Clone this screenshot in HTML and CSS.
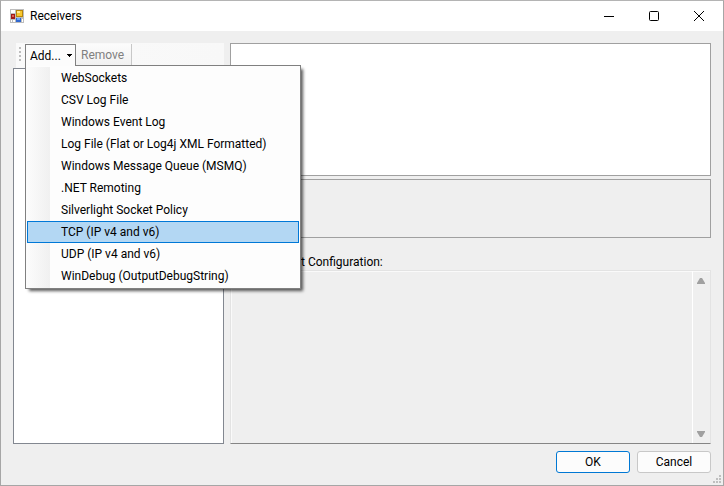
FILE: index.html
```html
<!DOCTYPE html>
<html lang="en">
<head>
<meta charset="utf-8">
<title>Receivers</title>
<link rel="stylesheet" href="styles.css">
</head>
<body>
<div class="window">
  <header class="titlebar">
    <svg class="app-icon" width="14" height="14" viewBox="0 0 14 14" shape-rendering="crispEdges" aria-hidden="true">
      <path fill="#bdbdbd" d="M0 0h14v14H0z"/>
      <path fill="#fff" d="M1 1h4v3H1zM1 11h1v2H1zM3 11h2v2H3zM12 10h1v3h-1z"/>
      <path fill="#a01818" d="M1 5h4v5H1z"/>
      <path fill="#e06050" d="M2 6h2v2H2z"/>
      <path fill="#b8860b" d="M6 1h7v7H6z"/>
      <path fill="#f8c830" d="M7 2h5v5H7z"/>
      <path fill="#ffe890" d="M7 2h3v2H7z"/>
      <path fill="#3068d0" d="M6 9h5v4H6z"/>
      <path fill="#70a8f8" d="M7 9h3v2H7z"/>
    </svg>
    <h1 class="title">Receivers</h1>
    <div class="captions">
      <button class="caption" type="button" aria-label="Minimize"><svg width="12" height="12" viewBox="0 0 12 12"><path d="M1 6.5h10"/></svg></button>
      <button class="caption" type="button" aria-label="Maximize"><svg width="12" height="12" viewBox="0 0 12 12"><rect x="1.5" y="1.5" width="9" height="9" rx="1"/></svg></button>
      <button class="caption" type="button" aria-label="Close"><svg width="12" height="12" viewBox="0 0 12 12"><path d="M1 1l10 10M11 1L1 11"/></svg></button>
    </div>
  </header>
  <main class="client">
    <section class="left">
      <div class="toolbar">
        <span class="grip"></span>
        <div class="dropdown">
          <button class="tool add" type="button" aria-haspopup="true" aria-expanded="true">Add...<svg width="5" height="3" viewBox="0 0 5 3" shape-rendering="crispEdges"><path d="M0 0h5v1H4v1H3v1H2V2H1V1H0z"/></svg></button>
          <div class="menu" role="menu">
            <button type="button" role="menuitem">WebSockets</button>
            <button type="button" role="menuitem">CSV Log File</button>
            <button type="button" role="menuitem">Windows Event Log</button>
            <button type="button" role="menuitem">Log File (Flat or Log4j XML Formatted)</button>
            <button type="button" role="menuitem">Windows Message Queue (MSMQ)</button>
            <button type="button" role="menuitem">.NET Remoting</button>
            <button type="button" role="menuitem">Silverlight Socket Policy</button>
            <button type="button" role="menuitem" class="selected">TCP (IP v4 and v6)</button>
            <button type="button" role="menuitem">UDP (IP v4 and v6)</button>
            <button type="button" role="menuitem">WinDebug (OutputDebugString)</button>
          </div>
        </div>
        <button class="tool remove" type="button" disabled>Remove</button>
      </div>
      <div class="tree"></div>
    </section>
    <section class="right">
      <div class="properties"></div>
      <div class="info"></div>
      <label class="config-label" for="config">t Configuration:</label>
      <div class="config">
        <textarea id="config" readonly></textarea>
        <div class="scrollbar">
          <svg width="8" height="6" viewBox="0 0 8 6"><path d="M3 0h2l3 5v1H0V5z"/></svg>
          <svg width="8" height="6" viewBox="0 0 8 6"><path d="M0 0h8v1L5 6H3L0 1z"/></svg>
        </div>
      </div>
    </section>
  </main>
  <footer class="footer">
    <button class="push default" type="button">OK</button>
    <button class="push" type="button">Cancel</button>
  </footer>
  <svg class="size-grip" width="8" height="8" viewBox="0 0 8 8" shape-rendering="crispEdges" aria-hidden="true"><path d="M6 0h2v2H6zM3 3h2v2H3zM6 3h2v2H6zM0 6h2v2H0zM3 6h2v2H3zM6 6h2v2H6z"/></svg>
</div>
</body>
</html>
```
FILE: styles.css
```css
* {
  box-sizing: border-box;
}

body {
  margin: 0;
  font: 12px/16px Roboto, "Open Sans", sans-serif;
  color: #000;
}

button {
  margin: 0;
  padding: 0;
  border: 0;
  background: none;
  font: inherit;
  color: inherit;
}

.window {
  position: relative;
  display: flex;
  flex-direction: column;
  height: 100vh;
  border: 1px solid #a6a6a6;
  border-top-color: #b4b4b4;
  background: #efefef;
}

.titlebar {
  display: flex;
  align-items: center;
  height: 30px;
  padding: 0 2px 0 9px;
  background: #fff;
}

.title {
  flex: 1;
  margin: 0 0 0 6px;
  font-size: 12px;
  font-weight: 400;
}

.captions {
  display: flex;
}

.caption {
  display: flex;
  align-items: center;
  justify-content: center;
  width: 45px;
  height: 30px;
}

.caption svg {
  fill: none;
  stroke: #000;
}

.client {
  flex: 1;
  display: grid;
  grid-template-columns: 211fr 481fr;
  gap: 6px;
  min-height: 0;
  padding: 12px 12px 0;
}

.left,
.right {
  display: flex;
  flex-direction: column;
  min-width: 0;
}

.toolbar {
  display: flex;
  height: 25px;
  margin-left: 3px;
  background: linear-gradient(90deg, #fafafa, #f8f8f8);
}

.grip {
  width: 2px;
  height: 14px;
  margin: 4px 4px 0 3px;
  background: repeating-linear-gradient(#bdbdbd 0 2px, transparent 2px 4px);
}

.dropdown {
  position: relative;
  margin-top: 1px;
}

.tool {
  display: flex;
  align-items: center;
  height: 22px;
}

.add {
  position: relative;
  z-index: 2;
  justify-content: space-between;
  width: 51px;
  padding: 0 3px 0 4px;
  border: 1px solid #808080;
  border-bottom: 0;
  background: #fcfcfc;
}

.remove {
  width: 56px;
  margin-top: 1px;
  padding-left: 5px;
  border-right: 1px solid #c8c8c8;
  background: linear-gradient(#fcfcfc, #f1f1f1);
  color: #808080;
}

.menu {
  position: absolute;
  z-index: 1;
  top: 21px;
  left: 0;
  width: 276px;
  padding: 1px;
  border: 1px solid #808080;
  background: linear-gradient(90deg, #fcfcfc, #f0f0f0) 0 1px / 24px 100% no-repeat #fdfdfd;
  box-shadow: 3px 3px 3px -1px rgb(0 0 0 / 65%);
}

.menu button {
  display: block;
  width: 100%;
  height: 22px;
  padding: 0 0 0 33px;
  border: 1px solid transparent;
  text-align: left;
  white-space: nowrap;
}

.menu .selected {
  border-color: #0078d7;
  background: #b3d7f3;
}

.tree {
  flex: 1;
  border: 1px solid #828790;
  background: #fff;
}

.properties {
  height: 133px;
  border: 1px solid #a0a0a0;
  background: #fff;
}

.info {
  height: 59px;
  margin-top: 3px;
  border: 1px solid #a0a0a0;
}

.config-label {
  margin-top: 16px;
  padding-left: 71px;
}

.config {
  flex: 1;
  display: flex;
  min-height: 0;
  border: 1px solid #e3e3e3;
  border-bottom-color: #858585;
  box-shadow: inset 1px 1px #fafafa;
}

.config textarea {
  flex: 1;
  min-width: 0;
  padding: 4px;
  border: 0;
  outline: 0;
  background: transparent;
  font: inherit;
  resize: none;
}

.scrollbar {
  display: flex;
  flex-direction: column;
  align-items: center;
  justify-content: space-between;
  width: 18px;
  padding: 7px 1px 6px 0;
  border-left: 1px solid #fff;
}

.scrollbar svg {
  fill: #a0a0a0;
}

.footer {
  display: flex;
  justify-content: flex-end;
  gap: 7px;
  padding: 7px 12px 12px;
}

.push {
  width: 74px;
  height: 22px;
  border: 1px solid #c8c8c8;
  border-radius: 3px;
  background: #fcfcfc;
  line-height: 20px;
}

.push.default {
  border-color: #0078d4;
}

.size-grip {
  position: absolute;
  right: 2px;
  bottom: 2px;
  fill: #bfbfbf;
}
```
